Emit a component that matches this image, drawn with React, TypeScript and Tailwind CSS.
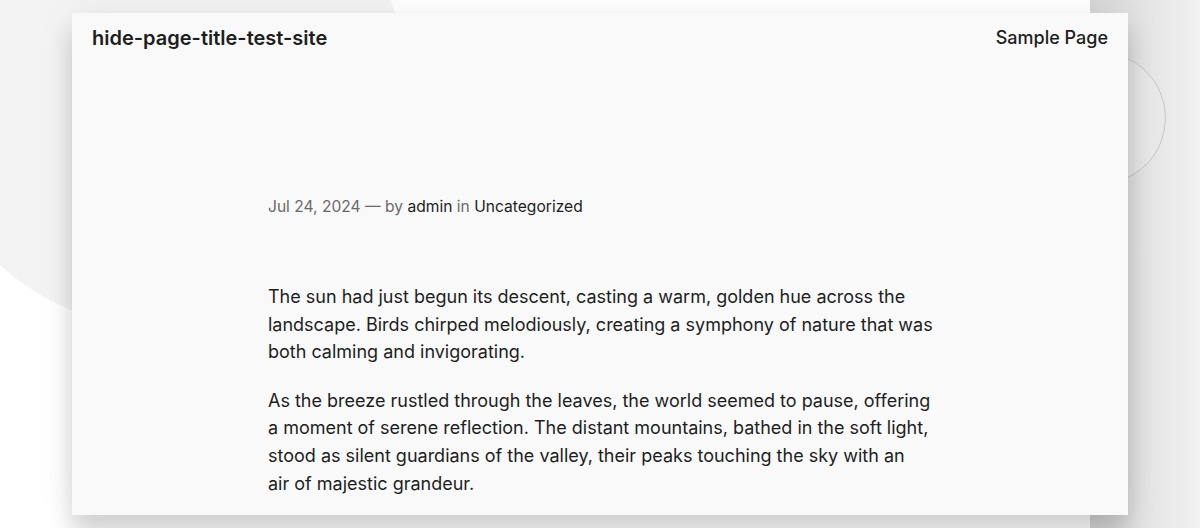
import React from 'react';

// Короткий пост на странице блога
const paragraphs = [
  'The sun had just begun its descent, casting a warm, golden hue across the landscape. Birds chirped melodiously, creating a symphony of nature that was both calming and invigorating.',
  'As the breeze rustled through the leaves, the world seemed to pause, offering a moment of serene reflection. The distant mountains, bathed in the soft light, stood as silent guardians of the valley, their peaks touching the sky with an air\u00a0of majestic grandeur.',
];

export default function App() {
  return (
    <div className="relative h-[528px] w-[1200px] overflow-hidden bg-white font-['Inter',sans-serif] text-[#1e1e1e]">
      {/* декоративные круги и тень на фоне */}
      <div className="absolute left-[-80px] top-[-158px] h-[486px] w-[486px] rounded-full bg-[#f3f3f3]" />
      <div className="absolute right-0 top-0 h-full w-[110px] bg-gradient-to-r from-[#d6d6d6] via-[#e4e4e4] to-[#f1f1f1]" />
      <div className="absolute left-[1034px] top-[52px] h-[132px] w-[132px] rounded-full border border-[#c6c6c6] bg-gradient-to-r from-[#dcdcdc] to-[#e9e9e9]" />

      <div className="relative ml-[72px] mt-[13px] h-[502px] w-[1056px] overflow-hidden bg-[#f9f9f9] shadow-[0_18px_22px_rgba(0,0,0,0.16),0_0_40px_rgba(0,0,0,0.06)]">
        <header className="flex items-center justify-between px-[20px] pt-[13px]">
          <div className="text-[20px] font-semibold leading-[24px]">hide-page-title-test-site</div>
          <nav className="text-[18px] font-medium leading-[24px]">Sample Page</nav>
        </header>

        <article className="ml-[196px] mt-[147px] w-[666px]">
          <div className="text-[15.6px] leading-[20px] text-[#6a6a6a]">
            Jul 24, 2024 — by <span className="text-[#1e1e1e]">admin</span> in{' '}
            <span className="text-[#1e1e1e]">Uncategorized</span>
          </div>

          <div className="mt-[66px] flex flex-col gap-[21px]">
            {paragraphs.map((text, idx) => (
              <p key={idx} className="text-[18px] leading-[27.6px]">
                {text}
              </p>
            ))}
          </div>
        </article>
      </div>
    </div>
  );
}
